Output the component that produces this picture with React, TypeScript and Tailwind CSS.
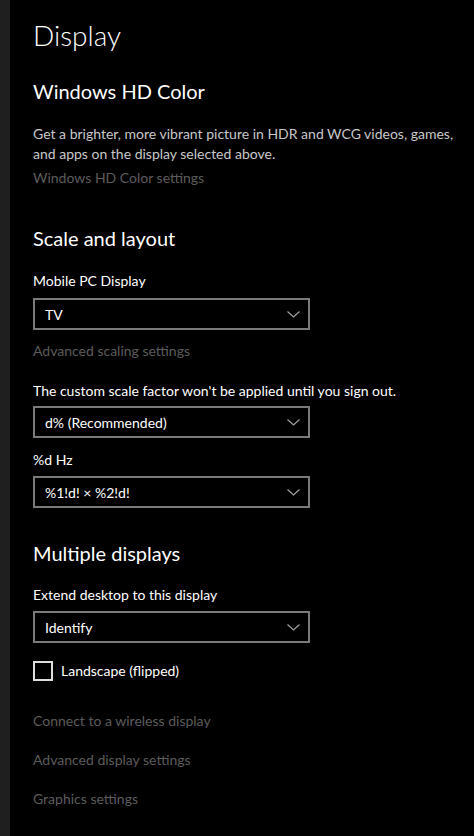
const Chevron = () => (
  <svg width="13" height="7" viewBox="0 0 13 7" fill="none">
    <path d="M0.5 0.5 L6.5 6 L12.5 0.5" stroke="#a0a0a0" strokeWidth="1.2" />
  </svg>
);

const Select = ({ value }: { value: string }) => (
  <div className="flex h-8 w-[277px] items-center justify-between border-2 border-[#7a7a7a] pl-[10px] pr-[8px] text-[14px] text-white">
    <span>{value}</span>
    <Chevron />
  </div>
);

const Label = ({ children }: { children: React.ReactNode }) => (
  <p className="text-[14px] leading-5 text-white">{children}</p>
);

const Link = ({ children }: { children: React.ReactNode }) => (
  <p className="text-[14px] leading-5 text-[#5c5c5c]">{children}</p>
);

const Heading = ({ children }: { children: React.ReactNode }) => (
  <h2 className="text-[20px] leading-7 text-white">{children}</h2>
);

export default function App() {
  return (
    <div className="flex min-h-[836px] w-[474px] bg-black font-['Segoe_UI','Lato',sans-serif]">
      <div className="w-[10px] shrink-0 bg-[#1f1f1f]" />
      <main className="flex flex-col pl-[23px] pt-[17px]">
        <h1 className="text-[28px] font-light leading-9 text-white">Display</h1>

        <section className="mt-[24px]">
          <Heading>Windows HD Color</Heading>
          <p className="mt-[19px] text-[14px] leading-5 text-[#c8c8c8]">
            Get a brighter, more vibrant picture in HDR and WCG videos, games,
            <br />
            and apps on the display selected above.
          </p>
          <div className="mt-[4px]">
            <Link>Windows HD Color settings</Link>
          </div>
        </section>

        <section className="mt-[36px] flex flex-col">
          <Heading>Scale and layout</Heading>
          <div className="mt-[19px]">
            <Label>Mobile PC Display</Label>
          </div>
          <div className="mt-[7px]">
            <Select value="TV" />
          </div>
          <div className="mt-[11px]">
            <Link>Advanced scaling settings</Link>
          </div>
          <div className="mt-[20px]">
            <Label>The custom scale factor won't be applied until you sign out.</Label>
          </div>
          <div className="mt-[5px]">
            <Select value="d% (Recommended)" />
          </div>
          <div className="mt-[12px]">
            <Label>%d Hz</Label>
          </div>
          <div className="mt-[6px]">
            <Select value="%1!d! × %2!d!" />
          </div>
        </section>

        <section className="mt-[31px] flex flex-col">
          <Heading>Multiple displays</Heading>
          <div className="mt-[18px]">
            <Label>Extend desktop to this display</Label>
          </div>
          <div className="mt-[6px]">
            <Select value="Identify" />
          </div>
          <label className="mt-[18px] flex items-center gap-[8px]">
            <span className="h-5 w-5 border-2 border-[#dedede]" />
            <span className="text-[14px] leading-5 text-white">Landscape (flipped)</span>
          </label>
          <div className="mt-[30px] flex flex-col gap-[19px]">
            <Link>Connect to a wireless display</Link>
            <Link>Advanced display settings</Link>
            <Link>Graphics settings</Link>
          </div>
        </section>
      </main>
    </div>
  );
}
